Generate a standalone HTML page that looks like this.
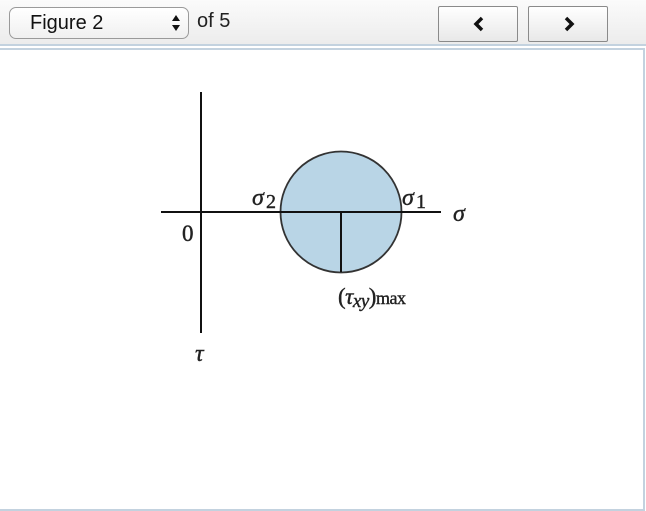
<!DOCTYPE html>
<html><head><style>
body{margin:0;width:646px;height:510px;background:#fff;font-family:"Liberation Sans",Arial,sans-serif;position:relative;overflow:hidden}
.bar{position:absolute;left:0;top:0;width:646px;height:44px;background:linear-gradient(#fbfbfb,#ececec);border-bottom:2px solid #c3d2df}
.sel{position:absolute;left:9px;top:7px;width:178px;height:30px;border:1px solid #9a9a9a;border-radius:7px;background:linear-gradient(#fff,#f0f0f0)}
.sel span{position:absolute;left:20px;top:4px;font-size:20px;color:#111}
.of{position:absolute;left:197px;top:10px;font-size:20px;color:#222}
.btn{position:absolute;top:6px;width:78px;height:34px;border:1px solid #8a8a8a;background:linear-gradient(#fff,#e8e8e8);border-radius:2px}
.frame{position:absolute;left:0;top:48px;width:643px;height:459px;border-top:2px solid #c3d2df;border-right:2px solid #c3d2df;border-bottom:2px solid #c3d2df}
</style></head><body>
<div class="bar">
<div class="sel"><span>Figure 2</span>
<svg style="position:absolute;left:161px;top:6px" width="10" height="18"><path d="M5 1L9 7H1Z M5 17L9 11H1Z" fill="#111"/></svg></div>
<div class="of">of 5</div>
<div class="btn" style="left:438px"><svg style="position:absolute;left:33px;top:9px" width="14" height="16"><path d="M10 2L4 8L10 14" stroke="#111" stroke-width="3.5" fill="none"/></svg></div>
<div class="btn" style="left:528px"><svg style="position:absolute;left:33px;top:9px" width="14" height="16"><path d="M4 2L10 8L4 14" stroke="#111" stroke-width="3.5" fill="none"/></svg></div>
</div>
<div class="frame"></div>
<svg style="position:absolute;left:0;top:0" width="646" height="510">
<circle cx="341" cy="212" r="60.5" fill="#b9d5e6" stroke="#333" stroke-width="1.8"/>
<line x1="201" y1="92" x2="201" y2="333" stroke="#111" stroke-width="2"/>
<line x1="161" y1="212" x2="441" y2="212" stroke="#111" stroke-width="2"/>
<line x1="341" y1="212" x2="341" y2="272" stroke="#111" stroke-width="2"/>
<g font-family="Liberation Serif,serif" fill="#222" stroke="#222" stroke-width="0.4">
<text x="252" y="205" font-size="24" font-style="italic">σ</text><text x="266" y="208" font-size="20">2</text>
<text x="402" y="205" font-size="24" font-style="italic">σ</text><text x="416" y="208" font-size="20">1</text>
<text x="453" y="221" font-size="24" font-style="italic">σ</text>
<text x="182" y="241" font-size="23">0</text>
<text x="195" y="361" font-size="24" font-style="italic">τ</text>
<text x="338" y="304" font-size="23" letter-spacing="-0.5">(<tspan font-style="italic">τ</tspan><tspan font-size="19" font-style="italic" dy="3">xy</tspan><tspan dy="-3">)</tspan><tspan font-size="18">max</tspan></text>
</g>
</svg>
</body></html>
